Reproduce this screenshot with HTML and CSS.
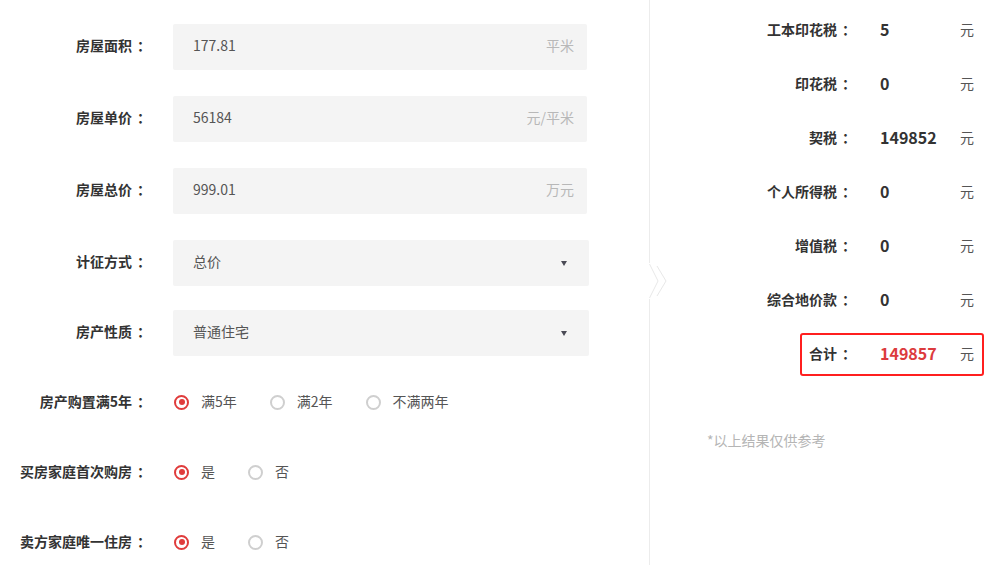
FILE: index.html
```html
<!DOCTYPE html>
<html lang="zh-CN">
<head>
<meta charset="utf-8">
<title>税费计算</title>
<link rel="stylesheet" href="styles.css">
</head>
<body>
<div class="page">
  <div class="form">
    <div class="row gap26">
      <div class="label">房屋面积<span class="c">：</span></div>
      <div class="field"><span class="val">177.81</span><span class="unit">平米</span></div>
    </div>
    <div class="row gap26">
      <div class="label">房屋单价<span class="c">：</span></div>
      <div class="field"><span class="val">56184</span><span class="unit">元/平米</span></div>
    </div>
    <div class="row gap26">
      <div class="label">房屋总价<span class="c">：</span></div>
      <div class="field"><span class="val">999.01</span><span class="unit">万元</span></div>
    </div>
    <div class="row gap24">
      <div class="label">计征方式<span class="c">：</span></div>
      <div class="field select"><span class="val">总价</span><span class="caret"></span></div>
    </div>
    <div class="row gap24">
      <div class="label">房产性质<span class="c">：</span></div>
      <div class="field select"><span class="val">普通住宅</span><span class="caret"></span></div>
    </div>
    <div class="row gap24">
      <div class="label">房产购置满5年<span class="c">：</span></div>
      <div class="options">
        <span class="opt"><span class="radio on"></span><span class="ot">满5年</span></span>
        <span class="opt"><span class="radio"></span><span class="ot">满2年</span></span>
        <span class="opt"><span class="radio"></span><span class="ot">不满两年</span></span>
      </div>
    </div>
    <div class="row gap24">
      <div class="label">买房家庭首次购房<span class="c">：</span></div>
      <div class="options">
        <span class="opt"><span class="radio on"></span><span class="ot">是</span></span>
        <span class="opt"><span class="radio"></span><span class="ot">否</span></span>
      </div>
    </div>
    <div class="row gap24">
      <div class="label">卖方家庭唯一住房<span class="c">：</span></div>
      <div class="options">
        <span class="opt"><span class="radio on"></span><span class="ot">是</span></span>
        <span class="opt"><span class="radio"></span><span class="ot">否</span></span>
      </div>
    </div>
  </div>
  <div class="result">
    <svg class="chevron" width="22" height="36" viewBox="0 0 22 36">
      <rect x="0" y="0" width="3" height="36" fill="#fff"/>
      <polyline points="0.5,1 9,18 0.5,35" fill="none" stroke="#e8e8e8" stroke-width="1"/>
      <polyline points="8,3 17,18 8,33" fill="none" stroke="#e8e8e8" stroke-width="1"/>
    </svg>
    <div class="res-row"><span class="rl">工本印花税<span class="c">：</span></span><span class="rv">5</span><span class="ru">元</span></div>
    <div class="res-row"><span class="rl">印花税<span class="c">：</span></span><span class="rv">0</span><span class="ru">元</span></div>
    <div class="res-row"><span class="rl">契税<span class="c">：</span></span><span class="rv">149852</span><span class="ru">元</span></div>
    <div class="res-row"><span class="rl">个人所得税<span class="c">：</span></span><span class="rv">0</span><span class="ru">元</span></div>
    <div class="res-row"><span class="rl">增值税<span class="c">：</span></span><span class="rv">0</span><span class="ru">元</span></div>
    <div class="res-row"><span class="rl">综合地价款<span class="c">：</span></span><span class="rv">0</span><span class="ru">元</span></div>
    <div class="res-row total"><span class="rl">合计<span class="c">：</span></span><span class="rv">149857</span><span class="ru">元</span></div>
    <div class="note">*以上结果仅供参考</div>
  </div>
</div>
</body>
</html>
```

FILE: styles.css
```css
* { box-sizing: border-box; }
html, body {
  margin: 0;
  padding: 0;
  background: #fff;
}
body {
  font-family: "Noto Sans CJK SC", "Microsoft YaHei", sans-serif;
  font-size: 14px;
  color: #333;
}
.page {
  display: flex;
  width: 1000px;
  height: 565px;
  overflow: hidden;
}
.form {
  width: 650px;
  flex: none;
  border-right: 1px solid #ececec;
  padding-top: 24px;
  display: flex;
  flex-direction: column;
}
.row {
  display: flex;
  align-items: center;
  height: 46px;
  flex: none;
}
.gap26 { margin-bottom: 26px; }
.gap24 { margin-bottom: 24px; }
.c {
  display: inline-block;
  width: 14px;
  padding-left: 5px;
  overflow: visible;
  white-space: nowrap;
}
.label {
  width: 146px;
  text-align: right;
  font-weight: bold;
  color: #333;
  white-space: nowrap;
  margin-right: 27px;
  padding-bottom: 4px;
}
.field {
  width: 414px;
  height: 46px;
  background: #f4f4f4;
  border-radius: 2px;
  display: flex;
  align-items: center;
  justify-content: space-between;
  padding: 0 13px 0 20px;
}
.field.select {
  width: 416px;
  padding-right: 22px;
}
.val { color: #555; padding-bottom: 4px; }
.unit { color: #b8b8b8; padding-bottom: 4px; }
.caret {
  width: 0;
  height: 0;
  border-left: 3.5px solid transparent;
  border-right: 3.5px solid transparent;
  border-top: 5px solid #4a4a55;
}
.options {
  display: flex;
  align-items: center;
  color: #555;
  padding-bottom: 2px;
}
.opt {
  display: flex;
  align-items: center;
  margin-right: 32px;
}
.ot { padding-bottom: 2px; }
.radio {
  width: 15px;
  height: 15px;
  border: 2px solid #cfcfcf;
  border-radius: 50%;
  margin-left: 1px;
  margin-right: 12px;
  display: flex;
  align-items: center;
  justify-content: center;
}
.radio.on { border-color: #e03c3c; }
.radio.on::after {
  content: "";
  width: 6px;
  height: 6px;
  border-radius: 50%;
  background: #e03c3c;
}
.result {
  position: relative;
  flex: 1;
  padding: 9px 16px 0 0;
  display: flex;
  flex-direction: column;
  align-items: flex-end;
}
.chevron {
  position: absolute;
  left: -1px;
  top: 263px;
}
.res-row {
  display: flex;
  align-items: center;
  height: 43px;
  margin-bottom: 11px;
  border: 2px solid transparent;
  border-radius: 3px;
  padding: 0 8px 0 7px;
  white-space: nowrap;
}
.rl {
  font-weight: bold;
  color: #333;
  padding-bottom: 4px;
}
.rv {
  width: 80px;
  margin-left: 29px;
  font-size: 16px;
  font-weight: bold;
  color: #333;
  padding-bottom: 4px;
}
.ru {
  width: 14px;
  color: #555;
  padding-bottom: 4px;
}
.total { border-color: #ff1f1f; }
.total .rv { color: #dc3b3d; }
.note {
  align-self: flex-start;
  margin-left: 57px;
  margin-top: 43px;
  font-size: 14px;
  color: #b5b5b5;
}
```
